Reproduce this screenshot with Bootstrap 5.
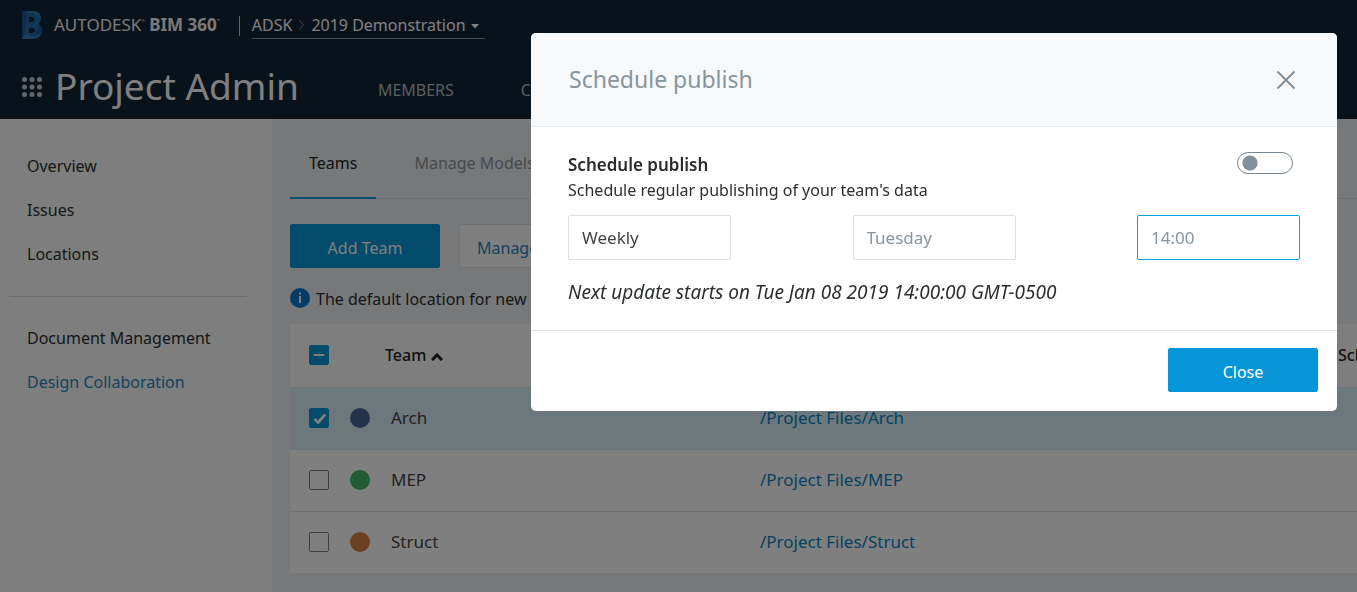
<!DOCTYPE html>
<html lang="en">
<head>
<meta charset="utf-8">
<meta name="viewport" content="width=device-width, initial-scale=1">
<title>Project Admin - Schedule publish</title>
<link href="https://cdn.jsdelivr.net/npm/bootstrap@5.3.0/dist/css/bootstrap.min.css" rel="stylesheet">
<style>
  :root { --brand: #0696d7; --ink: #2c2f31; --slate: #87959f; --rule: #dfe4e8; }
  body { font: 16px/24px "Noto Sans", sans-serif; color: var(--ink); background: #eef0f3; overflow: hidden; }
  a { text-decoration: none; color: #0b84c1; }

  /* top bar */
  .topbar { background: #0f2437; color: #fff; height: 119px; padding: 0 22px; }
  .topbar a { color: #fff; }
  .topline { height: 50px; }
  .maker { font-size: 17px; margin-left: 11px; color: #f4f4f4; }
  .maker sup { font-size: 4px; top: -9px; }
  .upright { width: 1px; height: 20px; background: #ccc; margin: 2px 12px 0 19px; }
  .crumb { height: 28px; border-bottom: 1px solid #8d9aa3; padding-right: 5px; }
  .crumb .sep { margin: 0 7px; }
  .titleline { height: 69px; }
  .titleline h1 { font-size: 37px; line-height: 44px; margin: 2px 79px 0 13px; font-weight: 400; }
  .titleline nav { gap: 67px; margin-top: 10px; }
  .titleline nav a { color: #b3bec5; }

  /* side menu */
  .sidemenu { width: 272px; flex: none; background: #fafdfb; padding: 25px 25px 0 9px; }
  .sidemenu a { display: block; line-height: 44px; padding-left: 18px; color: var(--ink); }
  .sidemenu a.current { color: #2a84b4; }
  .sidemenu hr { margin: 20px 0 19px; border-color: #d5d7e0; opacity: 1; }

  /* team list */
  .content { padding-left: 18px; min-height: 473px; }
  .tabs { border-bottom: 1px solid #d9dce0; height: 80px; gap: 19px; }
  .tabs a { padding: 32px 19px 0; height: 80px; color: #8a959c; border-bottom: 2px solid transparent; white-space: nowrap; }
  .tabs a.current { color: #222; border-color: #08a0dc; }
  .actions { gap: 19px; margin-top: 25px; }
  .act { height: 44px; border-radius: 2px; font-size: 16px; padding-top: 4px; padding-bottom: 0; }
  .act-main { width: 150px; --bs-btn-color: #fff; --bs-btn-bg: var(--brand); --bs-btn-border-color: var(--brand); }
  .act-side { background: #fff; border-color: var(--rule); color: #2a84c4; padding-left: 17px; padding-right: 17px; }
  .note { margin: 17px 0 13px; gap: 6px; white-space: nowrap; line-height: 26px; }
  .note span { padding-top: 3px; line-height: 23px; }
  .teams { table-layout: fixed; width: 1250px; background: #fff; margin: 0; }
  .teams th, .teams td { padding: 0; height: 62px; vertical-align: middle; border-top: 1px solid var(--rule); border-bottom: 0; }
  .teams thead th { height: 63px; background: #fafdfb; font-weight: 500; color: #222; border-top: 0; }
  .teams .picked td { background: #d8f1f9; }
  .teams tbody td { font-size: 17px; color: #444; }
  .teams td.team { padding-left: 6px; }
  .c-check { width: 60px; } .c-dot { width: 35px; } .c-team { width: 375px; } .c-path { width: 578px; }
  .teams .form-check-input { display: block; width: 20px; height: 20px; margin: 0 0 0 19px; border: 1px solid #75828b; border-radius: 2px; }
  .teams .form-check-input:checked, .teams .form-check-input:indeterminate { background-color: var(--brand); border-color: var(--brand); }
  .teams .form-check-input:checked { background-image: url("data:image/svg+xml,%3csvg xmlns='http://www.w3.org/2000/svg' viewBox='0 0 20 20'%3e%3cpath fill='none' stroke='%23fff' stroke-width='3' d='M5 11l4 4 8-9'/%3e%3c/svg%3e"); }
  .teams .form-check-input:indeterminate { background-image: url("data:image/svg+xml,%3csvg xmlns='http://www.w3.org/2000/svg' viewBox='0 0 20 20'%3e%3cpath stroke='%23fff' stroke-width='2' d='M4 10h12'/%3e%3c/svg%3e"); }
  .dot { display: block; width: 20px; height: 20px; border-radius: 50%; }
  .dot-arch { background: #4a6596; } .dot-mep { background: #43b567; } .dot-struct { background: #dd8146; }

  /* dialog */
  .modal-dialog { max-width: 806px; margin: 33px 20px 0 auto; }
  .modal-content { border: 0; border-radius: 5px; }
  .modal-header { height: 94px; background: #f8f9fb; padding: 0 41px 0 38px; border-color: #e6eaec; border-radius: 5px 5px 0 0; }
  .modal-title { font-size: 23px; line-height: 32px; font-weight: 400; color: var(--slate); margin-bottom: 2px; }
  .shut { border: 0; background: none; padding: 0; line-height: 0; }
  .modal-body { padding: 25px 37px 24px; }
  .modal-body label.heading { font-size: 17px; line-height: 26px; font-weight: 600; color: #2b2b2b; display: block; }
  .switch { appearance: none; width: 56px; height: 22px; border: 1px solid #77868f; border-radius: 11px; margin: 0 7px 0 0;
    background: radial-gradient(circle at 12px 10px, #81909a 7px, transparent 8px); }
  .picks { margin: 13px 0 18px; }
  .picks .form-select { width: 163px; height: 45px; font-size: 17px; padding: 0 13px; border: 1px solid #d9dfe5; border-radius: 2px; background: #fff; color: #444; }
  .picks .form-select.idle { color: var(--slate); }
  .picks .form-select.focal { border-color: #08a3d9; }
  .next { font-size: 19px; line-height: 28px; margin: 0; font-style: italic; }
  .modal-footer { height: 81px; padding: 0 19px 2px; border-color: #dfe3e5; }
  .modal-footer > * { margin: 0; }
</style>
</head>
<body>
<header class="topbar">
  <div class="topline d-flex align-items-center">
    <svg width="21" height="28" viewBox="0 0 21 28" aria-label="BIM 360 logo">
      <defs><linearGradient id="b1" x1="0" y1="0" x2="1" y2="1"><stop offset="0" stop-color="#1f5f9e"/><stop offset=".6" stop-color="#276fae"/><stop offset="1" stop-color="#123f74"/></linearGradient></defs>
      <path fill="url(#b1)" fill-rule="evenodd" d="M0 0h10.500C16 0 19 3 19 7c0 3-1 4.500-2.500 6 2.500 1.500 4 3.500 4 7 0 5-3.500 8-9 8H0zM7 6.500v4.500h3.500Q12.500 11 12.500 8.700 12.500 6 9.800 6 7 5.500 7 6.500zM7 17.500V22h3.500Q12.800 21.500 12.800 19.300 12.800 17 10 16.700 7 16.500 7 17.500z"/>
      <path fill="#1a5590" d="M0 0h3v20l-3 8z"/><path fill="#4a92cc" opacity=".55" d="M3 1C12-1 18 1 18.500 7 16 2 10 2 3 1zM0 28l5-5c4 3 10 3 14-2 0 4-3 7-8 7z"/>
    </svg>
    <span class="maker">AUTODESK<sup>®</sup> <b>BIM 360</b><sup>™</sup></span>
    <span class="upright"></span>
    <a href="#" class="crumb d-flex align-items-center">ADSK
      <svg class="sep" width="5" height="10" viewBox="0 0 5 10" fill="none" stroke="#8b979f"><path d="M.5.5l4 4.500-4 4.500"/></svg>2019 Demonstration
      <svg class="ms-1 mt-1" width="10" height="5" viewBox="0 0 10 5"><path fill="#fff" d="M1 0h8L5 4.500z"/></svg></a>
  </div>
  <div class="titleline d-flex align-items-center">
    <svg class="flex-shrink-0 mt-1" width="20" height="20" viewBox="0 0 20 20" fill="#c8ced1"><circle cx="2.500" cy="2.500" r="2.500"/><circle cx="10" cy="2.500" r="2.500"/><circle cx="17.500" cy="2.500" r="2.500"/><circle cx="2.500" cy="10" r="2.500"/><circle cx="10" cy="10" r="2.500"/><circle cx="17.500" cy="10" r="2.500"/><circle cx="2.500" cy="17.500" r="2.500"/><circle cx="10" cy="17.500" r="2.500"/><circle cx="17.500" cy="17.500" r="2.500"/></svg>
    <h1 class="text-nowrap">Project Admin</h1>
    <nav class="d-flex"><a href="#">MEMBERS</a><a href="#">C</a></nav>
  </div>
</header>

<div class="d-flex">
  <nav class="sidemenu">
    <a href="#">Overview</a><a href="#">Issues</a><a href="#">Locations</a>
    <hr>
    <a href="#">Document Management</a><a href="#" class="current">Design Collaboration</a>
  </nav>
  <main class="content flex-fill overflow-hidden">
    <nav class="tabs d-flex"><a href="#" class="current">Teams</a><a href="#">Manage Models</a></nav>
    <div class="actions d-flex">
      <button type="button" class="btn act act-main">Add Team</button>
      <button type="button" class="btn act act-side">Manage</button>
    </div>
    <p class="note d-flex align-items-center">
      <svg width="20" height="20" viewBox="0 0 20 20"><circle cx="10" cy="10" r="10" fill="#0a78cf"/><path fill="#fff" d="M9 4.500h2v2H9zM9 8h2v7H9z"/></svg>
      <span>The default location for new</span>
    </p>
    <table class="teams table">
      <thead><tr>
        <th class="c-check"><input class="form-check-input" type="checkbox" id="all" aria-label="Select all teams"></th>
        <th class="c-dot"></th>
        <th class="c-team">Team <svg width="12" height="8" viewBox="0 0 12 8" fill="none" stroke="#222" stroke-width="3"><path d="M1 7l5-5 5 5"/></svg></th>
        <th class="c-path"></th><th>Sch</th>
      </tr></thead>
      <tbody>
        <tr class="picked"><td><input class="form-check-input" type="checkbox" checked aria-label="Arch"></td><td><span class="dot dot-arch"></span></td><td class="team">Arch</td><td><a href="#">/Project Files/Arch</a></td><td></td></tr>
        <tr><td><input class="form-check-input" type="checkbox" aria-label="MEP"></td><td><span class="dot dot-mep"></span></td><td class="team">MEP</td><td><a href="#">/Project Files/MEP</a></td><td></td></tr>
        <tr><td><input class="form-check-input" type="checkbox" aria-label="Struct"></td><td><span class="dot dot-struct"></span></td><td class="team">Struct</td><td><a href="#">/Project Files/Struct</a></td><td></td></tr>
      </tbody>
    </table>
  </main>
</div>

<div class="modal-backdrop show"></div>
<div class="modal show d-block" tabindex="-1" role="dialog" aria-labelledby="dlg">
  <div class="modal-dialog">
    <div class="modal-content">
      <div class="modal-header d-flex justify-content-between">
        <h2 class="modal-title" id="dlg">Schedule publish</h2>
        <button type="button" class="shut" aria-label="Close dialog"><svg width="20" height="20" viewBox="0 0 20 20" stroke="#7d8d97" stroke-width="1.800" fill="none"><path d="M1.500 1.500l17 17M18.500 1.500l-17 17"/></svg></button>
      </div>
      <div class="modal-body">
        <div class="d-flex justify-content-between align-items-start">
          <div><label class="heading" for="sw">Schedule publish</label><div>Schedule regular publishing of your team's data</div></div>
          <input type="checkbox" role="switch" class="switch" id="sw">
        </div>
        <div class="picks d-flex justify-content-between">
          <select class="form-select" aria-label="Frequency"><option>Weekly</option></select>
          <select class="form-select idle" aria-label="Day"><option>Tuesday</option></select>
          <select class="form-select idle focal" aria-label="Time"><option>14:00</option></select>
        </div>
        <p class="next">Next update starts on Tue Jan 08 2019 14:00:00 GMT-0500</p>
      </div>
      <div class="modal-footer">
        <button type="button" class="btn act act-main">Close</button>
      </div>
    </div>
  </div>
</div>
<script src="https://cdn.jsdelivr.net/npm/bootstrap@5.3.0/dist/js/bootstrap.bundle.min.js"></script>
<script>document.getElementById('all').indeterminate = true;</script>
</body>
</html>
